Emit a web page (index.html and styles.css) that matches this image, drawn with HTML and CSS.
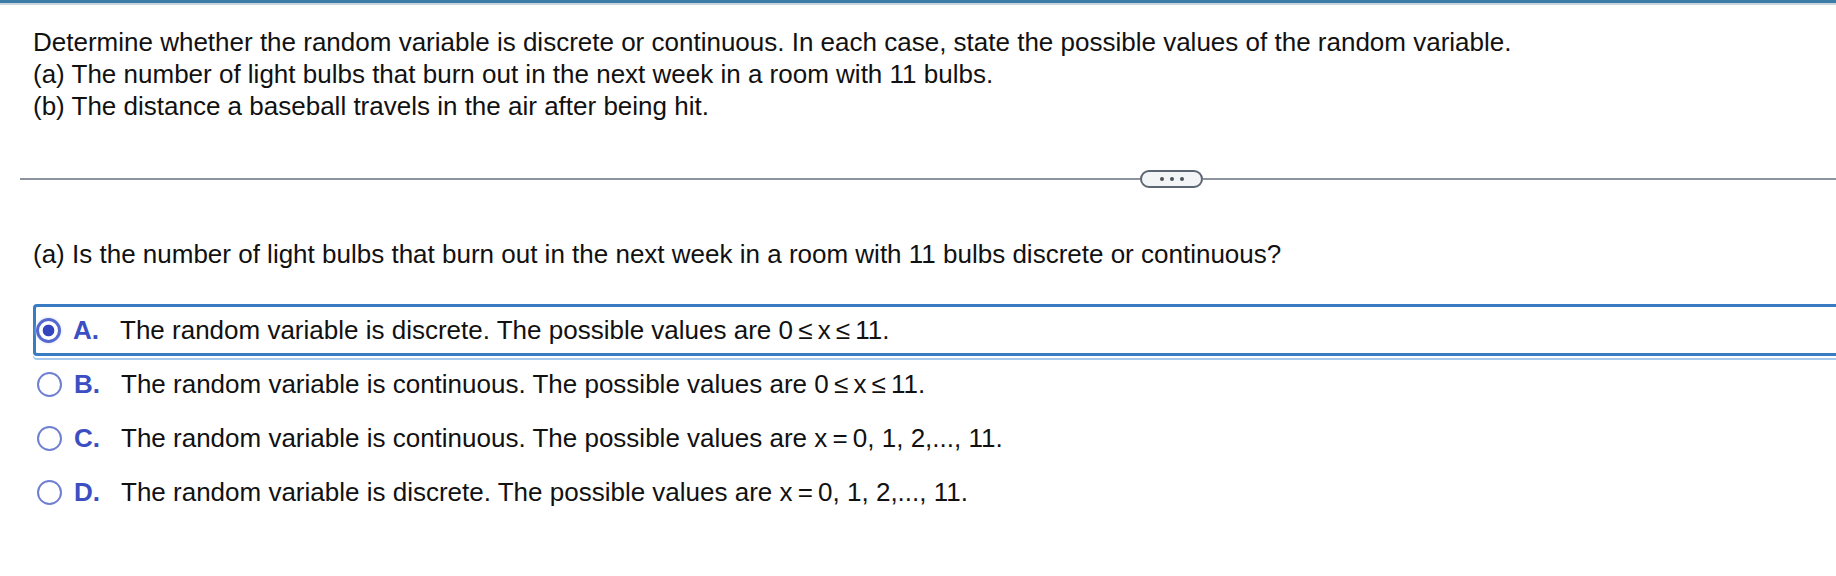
FILE: index.html
```html
<!DOCTYPE html>
<html>
<head>
<meta charset="utf-8">
<link rel="stylesheet" href="styles.css">
</head>
<body>
<div class="topbar"></div>
<div class="intro">
  <p>Determine whether the random variable is discrete or continuous. In each case, state the possible values of the random variable.</p>
  <p>(a) The number of light bulbs that burn out in the next week in a room with 11 bulbs.</p>
  <p>(b) The distance a baseball travels in the air after being hit.</p>
</div>
<div class="divider">
  <span class="rule rule-left"></span>
  <span class="more"><i></i><i></i><i></i></span>
  <span class="rule rule-right"></span>
</div>
<p class="question">(a) Is the number of light bulbs that burn out in the next week in a room with 11 bulbs discrete or continuous?</p>
<ul class="options">
  <li class="option selected"><span class="radio"></span><span class="letter">A.</span><span class="text">The random variable is discrete. The possible values are 0&#8201;&#8804;&#8201;x&#8201;&#8804;&#8201;11.</span></li>
  <li class="option"><span class="radio"></span><span class="letter">B.</span><span class="text">The random variable is continuous. The possible values are 0&#8201;&#8804;&#8201;x&#8201;&#8804;&#8201;11.</span></li>
  <li class="option"><span class="radio"></span><span class="letter">C.</span><span class="text">The random variable is continuous. The possible values are x&#8201;=&#8201;0, 1, 2,..., 11.</span></li>
  <li class="option"><span class="radio"></span><span class="letter">D.</span><span class="text">The random variable is discrete. The possible values are x&#8201;=&#8201;0, 1, 2,..., 11.</span></li>
</ul>
</body>
</html>
```
FILE: styles.css
```css
html, body {
  margin: 0;
  padding: 0;
  background: #fff;
  overflow: hidden;
}
body {
  font-family: "Liberation Sans", Arial, sans-serif;
  color: #111;
  font-size: 26px;
}
.topbar {
  height: 3px;
  background: #3b7ca6;
  border-bottom: 2px solid #c8d4de;
}
.intro {
  padding: 21px 0 0 33px;
}
.intro p {
  margin: 0;
  line-height: 32px;
}
.divider {
  display: flex;
  align-items: center;
  margin: 48px 0 0 20px;
  height: 18px;
}
.rule {
  height: 2px;
  background: #8c939f;
}
.rule-left {
  width: 1120px;
}
.rule-right {
  flex: 1;
}
.more {
  width: 59px;
  height: 14px;
  border: 2px solid #5c6672;
  border-radius: 9px;
  background: #f3f4f6;
  display: flex;
  align-items: center;
  justify-content: center;
  gap: 6px;
}
.more i {
  width: 4px;
  height: 4px;
  border-radius: 50%;
  background: #4a525c;
}
.question {
  margin: 51px 0 0 33px;
  line-height: 30px;
}
.options {
  list-style: none;
  margin: 35px 0 0 0;
  padding: 0 0 0 36px;
}
.option {
  display: flex;
  align-items: center;
  height: 54px;
}
.option.selected {
  height: 46px;
  margin: 0 -20px 1px -3px;
  padding-left: 3px;
  border: 3px solid #3a7cc4;
  border-right: none;
  border-radius: 4px 0 0 4px;
  box-shadow: 0 2px 0 #fff, 0 4px 0 #a9c9ec;
}
.option.selected .radio {
  margin-left: -3px;
}
.radio {
  box-sizing: border-box;
  width: 25px;
  height: 25px;
  border-radius: 50%;
  border: 2.5px solid #6f80d2;
  margin-left: 1px;
  flex: none;
}
.selected .radio {
  border: 3px solid #5468cf;
  background: radial-gradient(circle, #3346bf 0 5.5px, #fff 6.2px);
  box-shadow: 0 0 3px #c9d2f2;
}
.letter {
  color: #3b4fc2;
  font-weight: bold;
  margin-left: 12px;
  width: 47px;
}
.text {
  color: #111;
}
```
